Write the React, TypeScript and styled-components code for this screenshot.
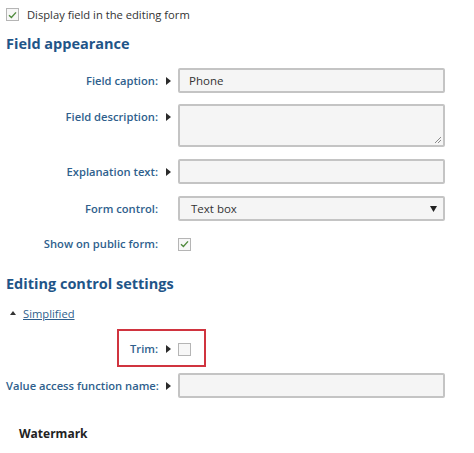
import React from 'react';
import styled, { createGlobalStyle } from 'styled-components';

const labelColor = '#2f5f8d';
const headingColor = '#1f5588';
const fieldBorder = '#c4c4c4';
const fieldBg = '#f5f5f5';

const GlobalStyle = createGlobalStyle`
  body {
    margin: 0;
    background: #ffffff;
    font-family: "Open Sans", "Noto Sans", Arial, sans-serif;
    color: #333333;
  }
`;

const Page = styled.div`
  width: 474px;
  height: 453px;
  overflow: hidden;
  padding: 8px 0 0 6px;
  box-sizing: border-box;
`;

const CheckLine = styled.label`
  display: flex;
  align-items: center;
  gap: 8px;
  font-size: 11.2px;
  height: 13px;
`;

const Box = styled.span`
  width: 13px;
  height: 13px;
  box-sizing: border-box;
  border: 1px solid #b5b5b5;
  background: #f7f7f7;
  display: inline-flex;
  align-items: center;
  justify-content: center;
  flex: none;
`;

const Heading = styled.h2<{ $top: number }>`
  margin: ${(p) => p.$top}px 0 0 0;
  font-size: 14.5px;
  font-weight: 700;
  color: ${headingColor};
  line-height: 20px;
`;

const Row = styled.div<{ $top: number; $align?: string }>`
  display: grid;
  grid-template-columns: 152px 20px 267px;
  align-items: ${(p) => p.$align ?? 'center'};
  margin-top: ${(p) => p.$top}px;
`;

const Label = styled.span<{ $pad?: number }>`
  text-align: right;
  font-size: 11.2px;
  line-height: 16px;
  font-weight: 600;
  color: ${labelColor};
  white-space: nowrap;
  padding-top: ${(p) => p.$pad ?? 0}px;
`;

const ArrowCell = styled.span<{ $pad?: number }>`
  display: flex;
  justify-content: flex-start;
  padding-left: 8px;
  padding-top: ${(p) => p.$pad ?? 0}px;
`;

const Input = styled.div`
  height: 25px;
  box-sizing: border-box;
  border: 2px solid ${fieldBorder};
  border-radius: 2px;
  background: ${fieldBg};
  font-size: 11.5px;
  display: flex;
  align-items: center;
  padding-left: 9px;
  color: #333;
`;

const TextArea = styled(Input)`
  height: 43px;
  position: relative;
`;

const Grip = styled.svg`
  position: absolute;
  right: 1px;
  bottom: 1px;
`;

const Select = styled(Input)`
  justify-content: space-between;
  padding-left: 11px;
  padding-right: 6px;
`;

const Toggle = styled.div`
  display: flex;
  align-items: center;
  gap: 7px;
  margin: 12px 0 0 4px;
  font-size: 11.2px;
  color: ${labelColor};
  height: 14px;
`;

const LinkText = styled.span`
  text-decoration: underline;
  color: ${labelColor};
`;

const Highlight = styled.div`
  position: relative;
`;

const Frame = styled.div`
  position: absolute;
  left: 111px;
  top: -12px;
  width: 89px;
  height: 38px;
  box-sizing: border-box;
  border: 2px solid #d0343f;
  pointer-events: none;
`;

const SubHeading = styled.div`
  margin: 27px 0 0 13px;
  font-size: 12px;
  font-weight: 700;
  color: #222;
`;

const Arrow = () => (
  <svg width="5" height="8" viewBox="0 0 5 8">
    <path d="M0 0 L5 4 L0 8 Z" fill="#2b2b2b" />
  </svg>
);

const Tick = () => (
  <svg width="9" height="8" viewBox="0 0 9 8">
    <path d="M1 4.2 L3.4 6.4 L8 1.4" fill="none" stroke="#4f8a3c" strokeWidth="1.4" />
  </svg>
);

export default function App() {
  return (
    <Page>
      <GlobalStyle />
      <CheckLine>
        <Box><Tick /></Box>
        Display field in the editing form
      </CheckLine>

      <Heading $top={13}>Field appearance</Heading>

      <Row $top={14}>
        <Label>Field caption:</Label>
        <ArrowCell><Arrow /></ArrowCell>
        <Input>Phone</Input>
      </Row>

      <Row $top={11} $align="start">
        <Label $pad={5}>Field description:</Label>
        <ArrowCell $pad={9}><Arrow /></ArrowCell>
        <TextArea>
          <Grip width="8" height="8" viewBox="0 0 8 8">
            <path d="M7 1 L1 7 M7 4 L4 7" stroke="#8a8a8a" strokeWidth="1" />
          </Grip>
        </TextArea>
      </Row>

      <Row $top={12}>
        <Label>Explanation text:</Label>
        <ArrowCell><Arrow /></ArrowCell>
        <Input />
      </Row>

      <Row $top={12}>
        <Label>Form control:</Label>
        <span />
        <Select>
          Text box
          <svg width="7" height="6" viewBox="0 0 7 6">
            <path d="M0 0 L7 0 L3.5 6 Z" fill="#222" />
          </svg>
        </Select>
      </Row>

      <Row $top={15}>
        <Label>Show on public form:</Label>
        <span />
        <Box><Tick /></Box>
      </Row>

      <Heading $top={22}>Editing control settings</Heading>

      <Toggle>
        <svg width="6" height="4" viewBox="0 0 6 4">
          <path d="M0 4 L3 0 L6 4 Z" fill="#333" />
        </svg>
        <LinkText>Simplified</LinkText>
      </Toggle>

      <Highlight>
        <Row $top={21}>
          <Label>Trim:</Label>
          <ArrowCell><Arrow /></ArrowCell>
          <Box />
        </Row>
        <Frame />
      </Highlight>

      <Row $top={16}>
        <Label>Value access function name:</Label>
        <ArrowCell><Arrow /></ArrowCell>
        <Input />
      </Row>

      <SubHeading>Watermark</SubHeading>
    </Page>
  );
}
